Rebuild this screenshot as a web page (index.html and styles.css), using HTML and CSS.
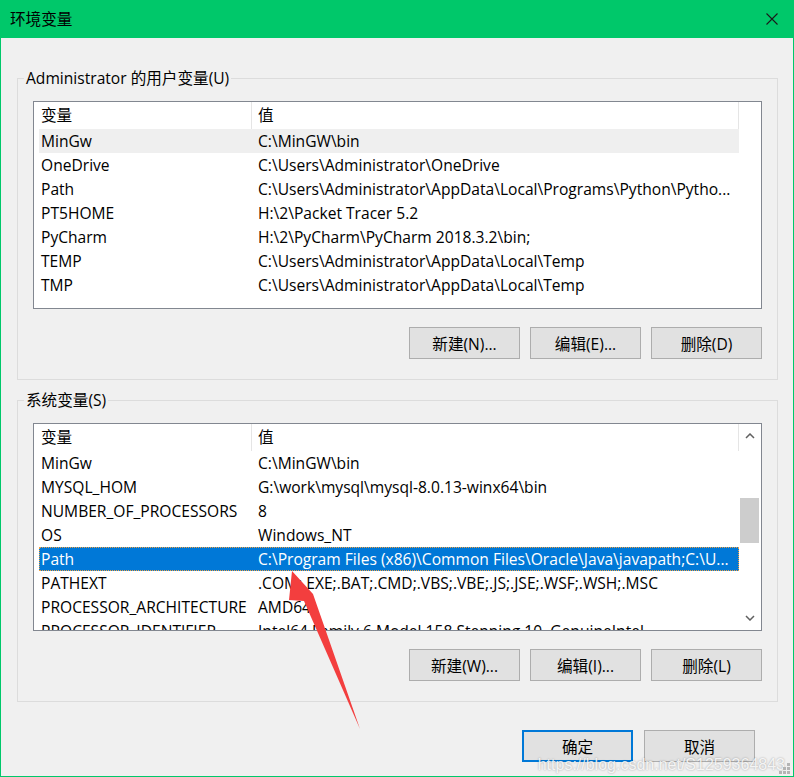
FILE: index.html
```html
<!DOCTYPE html>
<html lang="zh-CN">
<head>
    <meta charset="UTF-8">
    <title>环境变量</title>
    <link rel="stylesheet" href="styles.css">
</head>
<body>
    <div class="window">
        <div class="titlebar">
            <span class="title">环境变量</span>
            <svg class="close" width="12" height="12" viewBox="0 0 12 12">
                <path d="M0.5 0.5L11.5 11.5M11.5 0.5L0.5 11.5" stroke="#1a1a1a" stroke-width="1.1" fill="none"/>
            </svg>
        </div>

        <div class="content">
            <fieldset class="group">
                <legend>Administrator 的用户变量(U)</legend>
                <div class="list">
                    <div class="rows">
                        <div class="head">
                            <div class="cell name">变量</div>
                            <div class="cell value">值</div>
                        </div>
                        <div class="row hover">
                            <div class="cell name">MinGw</div>
                            <div class="cell value">C:\MinGW\bin</div>
                        </div>
                        <div class="row">
                            <div class="cell name">OneDrive</div>
                            <div class="cell value">C:\Users\Administrator\OneDrive</div>
                        </div>
                        <div class="row">
                            <div class="cell name">Path</div>
                            <div class="cell value">C:\Users\Administrator\AppData\Local\Programs\Python\Pytho...</div>
                        </div>
                        <div class="row">
                            <div class="cell name">PT5HOME</div>
                            <div class="cell value">H:\2\Packet Tracer 5.2</div>
                        </div>
                        <div class="row">
                            <div class="cell name">PyCharm</div>
                            <div class="cell value">H:\2\PyCharm\PyCharm 2018.3.2\bin;</div>
                        </div>
                        <div class="row">
                            <div class="cell name">TEMP</div>
                            <div class="cell value">C:\Users\Administrator\AppData\Local\Temp</div>
                        </div>
                        <div class="row">
                            <div class="cell name">TMP</div>
                            <div class="cell value">C:\Users\Administrator\AppData\Local\Temp</div>
                        </div>
                    </div>
                </div>
                <div class="actions">
                    <button type="button" class="btn">新建(N)...</button>
                    <button type="button" class="btn">编辑(E)...</button>
                    <button type="button" class="btn">删除(D)</button>
                </div>
            </fieldset>

            <fieldset class="group group-system">
                <legend>系统变量(S)</legend>
                <div class="list">
                    <div class="rows">
                        <div class="head">
                            <div class="cell name">变量</div>
                            <div class="cell value">值</div>
                        </div>
                        <div class="row">
                            <div class="cell name">MinGw</div>
                            <div class="cell value">C:\MinGW\bin</div>
                        </div>
                        <div class="row">
                            <div class="cell name">MYSQL_HOM</div>
                            <div class="cell value">G:\work\mysql\mysql-8.0.13-winx64\bin</div>
                        </div>
                        <div class="row">
                            <div class="cell name">NUMBER_OF_PROCESSORS</div>
                            <div class="cell value">8</div>
                        </div>
                        <div class="row">
                            <div class="cell name">OS</div>
                            <div class="cell value">Windows_NT</div>
                        </div>
                        <div class="row selected">
                            <div class="cell name">Path</div>
                            <div class="cell value">C:\Program Files (x86)\Common Files\Oracle\Java\javapath;C:\U...</div>
                        </div>
                        <div class="row">
                            <div class="cell name">PATHEXT</div>
                            <div class="cell value">.COM;.EXE;.BAT;.CMD;.VBS;.VBE;.JS;.JSE;.WSF;.WSH;.MSC</div>
                        </div>
                        <div class="row">
                            <div class="cell name">PROCESSOR_ARCHITECTURE</div>
                            <div class="cell value">AMD64</div>
                        </div>
                        <div class="row">
                            <div class="cell name">PROCESSOR_IDENTIFIER</div>
                            <div class="cell value">Intel64 Family 6 Model 158 Stepping 10, GenuineIntel</div>
                        </div>
                    </div>
                    <div class="scrollbar">
                        <div class="scroll-btn">
                            <svg width="10" height="6" viewBox="0 0 10 6"><path d="M1 5L5 1L9 5" stroke="#606060" stroke-width="1.5" fill="none"/></svg>
                        </div>
                        <div class="track"><div class="thumb"></div></div>
                        <div class="scroll-btn">
                            <svg width="10" height="6" viewBox="0 0 10 6"><path d="M1 1L5 5L9 1" stroke="#606060" stroke-width="1.5" fill="none"/></svg>
                        </div>
                    </div>
                </div>
                <div class="actions">
                    <button type="button" class="btn">新建(W)...</button>
                    <button type="button" class="btn">编辑(I)...</button>
                    <button type="button" class="btn">删除(L)</button>
                </div>
            </fieldset>

            <div class="footer">
                <button type="button" class="btn btn-default">确定</button>
                <button type="button" class="btn">取消</button>
            </div>
        </div>

        <!-- annotation drawn over the dialog -->
        <svg class="arrow" width="794" height="777" viewBox="0 0 794 777">
            <polygon points="292,571 313,594 360,729 304,601 289,600" fill="#f33e3e"/>
        </svg>
        <div class="watermark">https://blog.csdn.net/S1259364843</div>
        <svg class="grip" width="12" height="12" viewBox="0 0 12 12">
            <rect x="8" y="0" width="3" height="3" fill="#b4b4b4"/>
            <rect x="4" y="4" width="3" height="3" fill="#b4b4b4"/>
            <rect x="8" y="4" width="3" height="3" fill="#b4b4b4"/>
            <rect x="0" y="8" width="3" height="3" fill="#b4b4b4"/>
            <rect x="4" y="8" width="3" height="3" fill="#b4b4b4"/>
            <rect x="8" y="8" width="3" height="3" fill="#b4b4b4"/>
        </svg>
    </div>
</body>
</html>
```

FILE: styles.css
```css
body {
    margin: 0;
    font-family: "Open Sans", "Noto Sans CJK SC", sans-serif;
    font-size: 15.6px;
    color: #000;
}
.window {
    position: relative;
    width: 794px;
    height: 777px;
    box-sizing: border-box;
    background-color: #f0f0f0;
    border: 1px solid #00c86a;
    border-top: none;
    overflow: hidden;
}
.titlebar {
    height: 38px;
    margin: 0 -1px;
    background-color: #00c86a;
    display: flex;
    align-items: center;
    justify-content: space-between;
}
.title {
    padding-left: 10px;
    line-height: 38px;
}
.close {
    margin-right: 16px;
    margin-top: -1px;
}
.content {
    padding: 30px 15px 0 16px;
}
.group {
    margin: 0;
    min-width: 0;
    border: 1px solid #dcdcdc;
    padding: 13px 15px 20px 15px;
}
.group legend {
    line-height: 20px;
    padding: 0 2px;
    margin-left: -9px;
}
.group-system {
    margin-top: 10px;
}
.list {
    height: 208px;
    box-sizing: border-box;
    border: 1px solid #828790;
    background: white;
    overflow: hidden;
    display: flex;
}
.rows {
    padding-left: 5px;
    width: 700px;
}
.head, .row {
    display: flex;
    white-space: nowrap;
}
.head {
    height: 27px;
    line-height: 27px;
}
.row {
    height: 24px;
    line-height: 24px;
}
.cell {
    box-sizing: border-box;
    overflow: hidden;
}
.name {
    width: 213px;
    padding-left: 2px;
}
.value {
    width: 487px;
    padding-left: 6px;
}
.head .cell {
    border-right: 1px solid #e5e5e5;
}
.row.hover {
    background-color: #efefef;
}
.row.selected {
    background-color: #0078d7;
    color: white;
    outline: 1px dotted #f0a040;
    outline-offset: -1px;
}
.scrollbar {
    margin-left: 1px;
    width: 21px;
    display: flex;
    flex-direction: column;
}
.scroll-btn {
    height: 24px;
    display: flex;
    align-items: center;
    justify-content: center;
    padding-right: 1px;
}
.track {
    flex: 1;
}
.thumb {
    margin-top: 50px;
    width: 19px;
    height: 45px;
    background-color: #cdcdcd;
}
.actions {
    margin-top: 18px;
    display: flex;
    justify-content: flex-end;
    gap: 10px;
}
.btn {
    width: 111px;
    height: 32px;
    padding: 0;
    font-family: inherit;
    font-size: 15.6px;
    color: #000;
    background-color: #e1e1e1;
    border: 1px solid #adadad;
}
.btn-default {
    border: 2px solid #0078d7;
}
.footer {
    margin-top: 28px;
    padding-right: 23px;
    display: flex;
    justify-content: flex-end;
    gap: 11px;
}
.arrow {
    position: absolute;
    left: -1px;
    top: 0;
    pointer-events: none;
}
.watermark {
    position: absolute;
    right: 8px;
    bottom: 2px;
    font-family: "Liberation Sans", Arial, sans-serif;
    font-size: 16px;
    color: rgba(255, 255, 255, 0.85);
    text-shadow: 0 0 2px rgba(0, 0, 0, 0.35);
}
.grip {
    position: absolute;
    right: 2px;
    bottom: 1px;
}
```
